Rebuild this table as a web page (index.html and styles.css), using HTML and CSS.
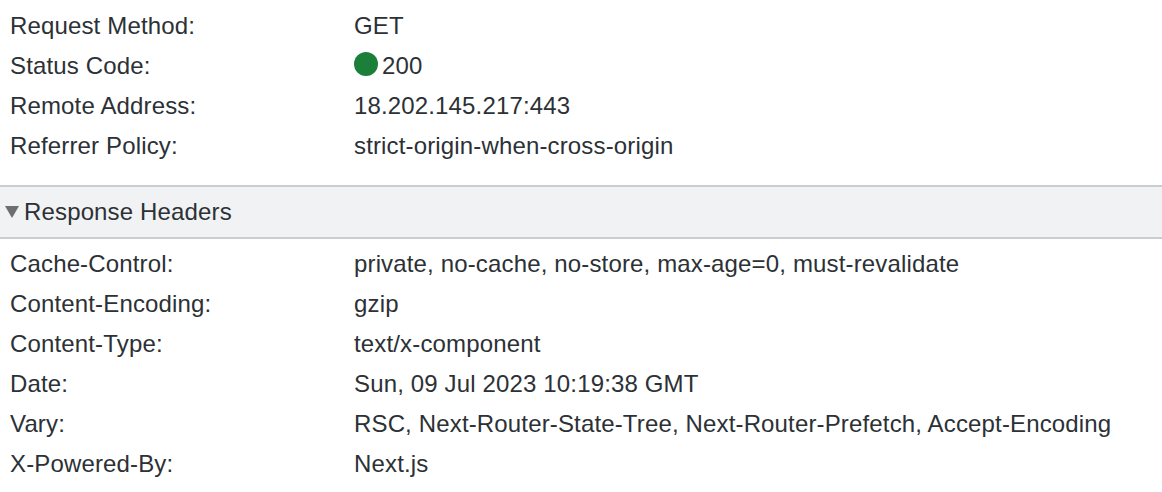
FILE: index.html
```html
<!DOCTYPE html>
<html>
<head>
<meta charset="utf-8">
<link rel="stylesheet" href="styles.css">
</head>
<body>
<div class="panel">
  <div class="section general">
    <div class="row"><div class="key">Request Method:</div><div class="val">GET</div></div>
    <div class="row"><div class="key">Status Code:</div><div class="val"><span class="dot"></span>200</div></div>
    <div class="row"><div class="key">Remote Address:</div><div class="val">18.202.145.217:443</div></div>
    <div class="row"><div class="key">Referrer Policy:</div><div class="val">strict-origin-when-cross-origin</div></div>
  </div>
  <div class="section-header">
    <span class="tri"></span><span class="title">Response Headers</span>
  </div>
  <div class="section response">
    <div class="row"><div class="key">Cache-Control:</div><div class="val">private, no-cache, no-store, max-age=0, must-revalidate</div></div>
    <div class="row"><div class="key">Content-Encoding:</div><div class="val">gzip</div></div>
    <div class="row"><div class="key">Content-Type:</div><div class="val">text/x-component</div></div>
    <div class="row"><div class="key">Date:</div><div class="val">Sun, 09 Jul 2023 10:19:38 GMT</div></div>
    <div class="row"><div class="key">Vary:</div><div class="val">RSC, Next-Router-State-Tree, Next-Router-Prefetch, Accept-Encoding</div></div>
    <div class="row"><div class="key">X-Powered-By:</div><div class="val">Next.js</div></div>
  </div>
</div>
</body>
</html>
```
FILE: styles.css
```css
html, body {
  margin: 0;
  padding: 0;
  background: #ffffff;
}
body {
  font-family: "Liberation Sans", Arial, sans-serif;
  font-size: 24px;
  letter-spacing: 0.15px;
  color: #2c3136;
  width: 1162px;
  height: 492px;
  overflow: hidden;
}
.panel {
  display: flex;
  flex-direction: column;
}
.section.general {
  padding: 6px 0 19px 0;
}
.section.response {
  padding: 5px 0 8px 0;
}
.row {
  display: flex;
  align-items: center;
  height: 40px;
  white-space: nowrap;
}
.key {
  width: 344px;
  padding-left: 10px;
  flex-shrink: 0;
}
.val {
  display: flex;
  align-items: center;
}
.dot {
  display: inline-block;
  width: 24px;
  height: 24px;
  border-radius: 50%;
  background: #1b7f3a;
  margin-right: 4px;
  position: relative;
  top: -2px;
}
.section-header {
  height: 50px;
  background: #f1f2f4;
  border-top: 2px solid #cbcdd1;
  border-bottom: 2px solid #cbcdd1;
  display: flex;
  align-items: center;
}
.tri {
  width: 0;
  height: 0;
  margin-left: 5px;
  margin-right: 5px;
  border-left: 7px solid transparent;
  border-right: 7px solid transparent;
  border-top: 12px solid #6e6e6e;
}
.title {
  color: #2c3136;
}
```
